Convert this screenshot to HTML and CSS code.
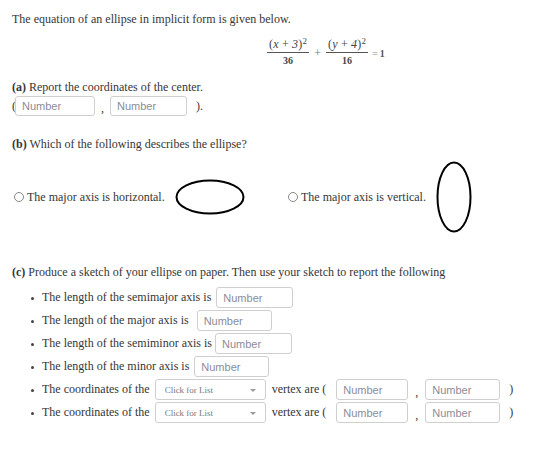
FILE: index.html
```html
<!DOCTYPE html>
<html>
<head>
<meta charset="utf-8">
<link rel="stylesheet" href="styles.css">
</head>
<body>
<div class="page">
  <p class="intro">The equation of an ellipse in implicit form is given below.</p>
  <div class="eq">
    <span class="frac">
      <span class="num">(<i>x</i> + <i>3</i>)<sup>2</sup></span>
      <span class="den">36</span>
    </span>
    <span class="op">+</span>
    <span class="frac">
      <span class="num">(<i>y</i> + <i>4</i>)<sup>2</sup></span>
      <span class="den">16</span>
    </span>
    <span class="eqone"><span class="eqsign">=</span>1</span>
  </div>

  <p class="qa"><b>(a)</b> Report the coordinates of the center.</p>
  <div class="row-a">
    <span class="paren">(</span>
    <span class="inp w80">Number</span>
    <span class="comma">,</span>
    <span class="inp w76">Number</span>
    <span class="close">).</span>
  </div>

  <p class="qb"><b>(b)</b> Which of the following describes the ellipse?</p>
  <div class="radios">
    <div class="opt opt1">
      <span class="radio"></span>
      <span class="optlabel">The major axis is horizontal.</span>
      <svg class="ell-h" width="70" height="36" viewBox="0 0 70 36"><ellipse cx="35" cy="18" rx="33.5" ry="16.5" fill="none" stroke="#000" stroke-width="2"/></svg>
    </div>
    <div class="opt opt2">
      <span class="radio"></span>
      <span class="optlabel">The major axis is vertical.</span>
      <svg class="ell-v" width="36" height="72" viewBox="0 0 36 72"><ellipse cx="18" cy="36" rx="16.5" ry="34.5" fill="none" stroke="#000" stroke-width="2"/></svg>
    </div>
  </div>

  <p class="qc"><b>(c)</b> Produce a sketch of your ellipse on paper. Then use your sketch to report the following</p>
  <ul class="list">
    <li><span class="lbl">The length of the semimajor axis is</span><span class="inp w76 ml5">Number</span></li>
    <li><span class="lbl">The length of the major axis is</span><span class="inp w75 ml8">Number</span></li>
    <li><span class="lbl">The length of the semiminor axis is</span><span class="inp w76 ml3">Number</span></li>
    <li><span class="lbl">The length of the minor axis is</span><span class="inp w75 ml5">Number</span></li>
    <li><span class="lbl">The coordinates of the</span><span class="sel">Click for List<span class="caret"></span></span><span class="lbl ml6">vertex are (</span><span class="inp w72 ml10">Number</span><span class="comma2">,</span><span class="inp w75">Number</span><span class="close2">)</span></li>
    <li><span class="lbl">The coordinates of the</span><span class="sel">Click for List<span class="caret"></span></span><span class="lbl ml6">vertex are (</span><span class="inp w72 ml10">Number</span><span class="comma2">,</span><span class="inp w75">Number</span><span class="close2">)</span></li>
  </ul>
</div>
</body>
</html>
```

FILE: styles.css
```css
html, body {
  margin: 0;
  padding: 0;
  background: #fff;
}
.page {
  padding: 11px 0 0 12px;
  font-family: "Liberation Serif", "Times New Roman", serif;
  font-size: 12px;
  color: #363636;
}
p {
  margin: 0;
  line-height: 16px;
}
b {
  font-weight: bold;
}
.intro {
  margin: 0;
}
.eq {
  margin-top: 11px;
  height: 28px;
  padding-left: 254px;
  display: flex;
  align-items: center;
  font-size: 12px;
  color: #444;
}
.frac {
  display: inline-flex;
  flex-direction: column;
  align-items: center;
  padding: 0 1px;
}
.num {
  display: block;
  line-height: 13px;
  padding: 0 2px 1px;
  border-bottom: 1px solid #555;
  white-space: nowrap;
  letter-spacing: 0.2px;
}
.num sup {
  font-size: 9px;
  vertical-align: 4px;
  line-height: 0;
}
.den {
  display: block;
  line-height: 12px;
  padding-top: 2px;
  font-size: 10px;
  font-weight: bold;
}
.op {
  margin: 2px 4px 0;
  color: #777;
}
.eqone {
  margin-left: 3px;
  margin-top: 2px;
  font-weight: bold;
  font-size: 10px;
  color: #555;
  display: flex;
  align-items: center;
}
.eqsign {
  font-weight: normal;
  color: #888;
  margin-right: 2px;
}
.qa {
  margin-top: 13px;
}
.row-a {
  margin-top: 1px;
  display: flex;
  align-items: center;
  height: 20px;
}
.row-a > * {
  flex-shrink: 0;
}
.paren {
  width: 3px;
}
.comma {
  width: 15px;
  text-align: center;
  padding-top: 4px;
}
.close {
  margin-left: 9px;
}
.inp {
  display: inline-flex;
  align-items: center;
  box-sizing: border-box;
  height: 20px;
  border: 1px solid #cfcfcf;
  border-radius: 3px;
  padding-left: 6px;
  font-family: "Liberation Sans", Arial, sans-serif;
  font-size: 11px;
  color: #8c8c9a;
  background: #fff;
}
.w80 { width: 80px; }
.w76 { width: 77px; }
.w75 { width: 75px; }
.w72 { width: 72px; }
.ml5 { margin-left: 5px; }
.ml6 { margin-left: 6px; }
.ml7 { margin-left: 7px; }
.ml8 { margin-left: 8px; }
.ml10 { margin-left: 10px; }
.ml3 { margin-left: 3px; }
.qb {
  margin-top: 20px;
}
.radios {
  margin-top: 9px;
  height: 72px;
  display: flex;
  align-items: center;
}
.opt {
  display: flex;
  align-items: center;
  flex-shrink: 0;
}
.opt1 {
  width: 274px;
}
.radio {
  width: 8px;
  height: 8px;
  border: 1px solid #888;
  border-radius: 50%;
  margin-left: 2px;
  margin-right: 3px;
}
.optlabel {
  line-height: 16px;
}
.ell-h {
  margin-left: 10px;
  display: block;
}
.ell-v {
  margin-left: 10px;
  display: block;
}
.qc {
  margin-top: 31px;
}
.list {
  list-style: none;
  margin: 7px 0 0 0;
  padding: 0 0 0 19px;
}
.list li {
  display: flex;
  align-items: center;
  height: 23px;
  position: relative;
  padding-left: 11px;
}
.list li > * {
  flex-shrink: 0;
}
.list li::before {
  content: "";
  position: absolute;
  left: 0;
  top: 10px;
  width: 3px;
  height: 3px;
  border-radius: 50%;
  background: #444;
}
.list .inp {
  height: 21px;
  margin-top: -2px;
}
.list li .lbl {
  white-space: nowrap;
  margin-top: -2px;
}
.sel {
  position: relative;
  display: inline-flex;
  align-items: center;
  box-sizing: border-box;
  width: 111px;
  height: 21px;
  margin-left: 5px;
  margin-top: -2px;
  border: 1px solid #cfcfcf;
  border-radius: 3px;
  padding-left: 9px;
  font-size: 9px;
  color: #777;
}
.caret {
  position: absolute;
  right: 9px;
  top: 9px;
  width: 0;
  height: 0;
  border-left: 3px solid transparent;
  border-right: 3px solid transparent;
  border-top: 3px solid #999;
}
.comma2 {
  width: 17px;
  text-align: center;
  padding-top: 4px;
}
.close2 {
  margin-left: 9px;
  margin-top: -2px;
}
```
